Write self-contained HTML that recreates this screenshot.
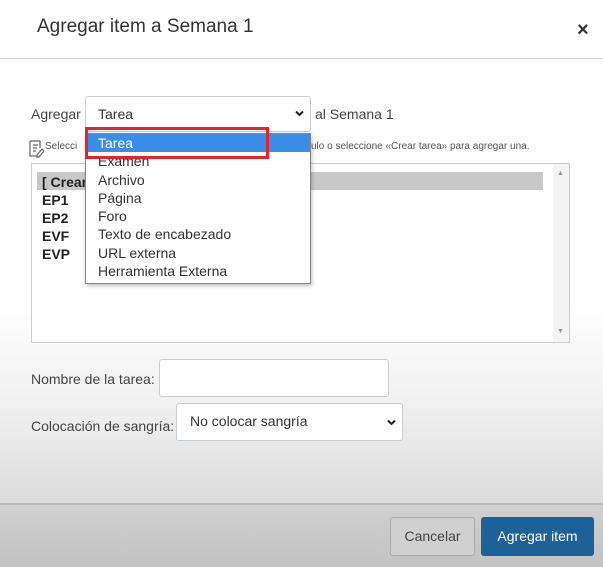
<!DOCTYPE html><html><head><style>
body{margin:0;width:603px;height:565px;overflow:hidden;font-family:"Liberation Sans",sans-serif;color:#333;position:relative;background:linear-gradient(#fff 0,#fff 300px,#f1f1f1 400px,#dcdcdc 503px)}
.a{position:absolute}
.sel{border:1px solid #c7cdd1;border-radius:3px;background:#fff;box-sizing:border-box}
</style></head><body>
<div class="a" style="left:37px;top:16px;font-size:19px;color:#333">Agregar item a Semana 1</div>
<div class="a" style="left:577px;top:19px;font-size:20px;font-weight:bold;color:#333">×</div>
<div class="a" style="left:0;top:58px;width:603px;height:1px;background:#d0d0d0"></div>
<div class="a" style="left:31px;top:106px;font-size:14px;color:#444">Agregar</div>
<div class="a sel" style="left:85px;top:96px;width:226px;height:36px"></div>
<div class="a" style="left:98px;top:106px;font-size:14px">Tarea</div>
<svg class="a" style="left:295px;top:110px" width="9" height="7"><path d="M1 1.5L4.5 5 8 1.5" fill="none" stroke="#222" stroke-width="2"/></svg>
<div class="a" style="left:315px;top:106px;font-size:14px;color:#444">al Semana 1</div>
<svg class="a" style="left:28px;top:140px" width="16" height="18"><path d="M2 1h10v7M2 1v15h7M5 5h5M5 8h4M5 11h3M9 15l5-6 2 2-5 6h-2z" fill="none" stroke="#666" stroke-width="1.2"/></svg>
<div class="a" style="left:45px;top:141px;font-size:10px;color:#555">Selecci</div>
<div class="a" style="left:311px;top:141px;font-size:10px;color:#555">ulo o seleccione «Crear tarea» para agregar una.</div>
<div class="a" style="left:31px;top:163px;width:539px;height:180px;border:1px solid #c7cdd1;box-sizing:border-box;background:#fff"></div>
<div class="a" style="left:553px;top:164px;width:16px;height:178px;background:#f4f4f4"></div>
<div class="a" style="left:557px;top:170px;font-size:7px;color:#999">▲</div>
<div class="a" style="left:557px;top:328px;font-size:7px;color:#999">▼</div>
<div class="a" style="left:37px;top:172px;width:506px;height:18px;background:#c8c8c8"></div>
<div class="a" style="left:42px;top:173px;font-size:14px;line-height:18px;font-weight:bold;color:#222">[ Crear<br>EP1<br>EP2<br>EVF<br>EVP</div>
<div class="a" style="left:85px;top:133px;width:226px;height:151px;background:#fff;border:1px solid #888;box-sizing:border-box;box-shadow:1px 2px 4px rgba(0,0,0,.25)"></div>
<div class="a" style="left:86px;top:134px;width:224px;height:18px;background:#3a8ee6"></div>
<div class="a" style="left:98px;top:134px;font-size:14px;line-height:18.3px;color:#333"><span style="color:#fff">Tarea</span><br>Examen<br>Archivo<br>Página<br>Foro<br>Texto de encabezado<br>URL externa<br>Herramienta Externa</div>
<div class="a" style="left:85px;top:127px;width:184px;height:32px;border:3px solid #e8212b;box-sizing:border-box"></div>
<div class="a" style="left:31px;top:371px;font-size:14px;color:#444">Nombre de la tarea:</div>
<div class="a sel" style="left:159px;top:359px;width:230px;height:38px"></div>
<div class="a" style="left:31px;top:418px;font-size:14px;color:#444">Colocación de sangría:</div>
<div class="a sel" style="left:176px;top:403px;width:227px;height:38px"></div>
<div class="a" style="left:190px;top:413px;font-size:14px">No colocar sangría</div>
<svg class="a" style="left:387px;top:419px" width="9" height="7"><path d="M1 1.5L4.5 5 8 1.5" fill="none" stroke="#222" stroke-width="2"/></svg>
<div class="a" style="left:0;top:503px;width:603px;height:62px;background:linear-gradient(#d0d0d0,#c2c2c2);border-top:2px solid #b8b8b8"></div>
<div class="a" style="left:390px;top:517px;width:85px;height:39px;border:1px solid #aaa;border-radius:3px;background:#d0d0d0;box-sizing:border-box;font-size:14px;color:#444;text-align:center;line-height:37px">Cancelar</div>
<div class="a" style="left:481px;top:517px;width:113px;height:39px;border-radius:3px;background:#1d6199;font-size:14px;color:#fff;text-align:center;line-height:39px">Agregar item</div>
</body></html>
